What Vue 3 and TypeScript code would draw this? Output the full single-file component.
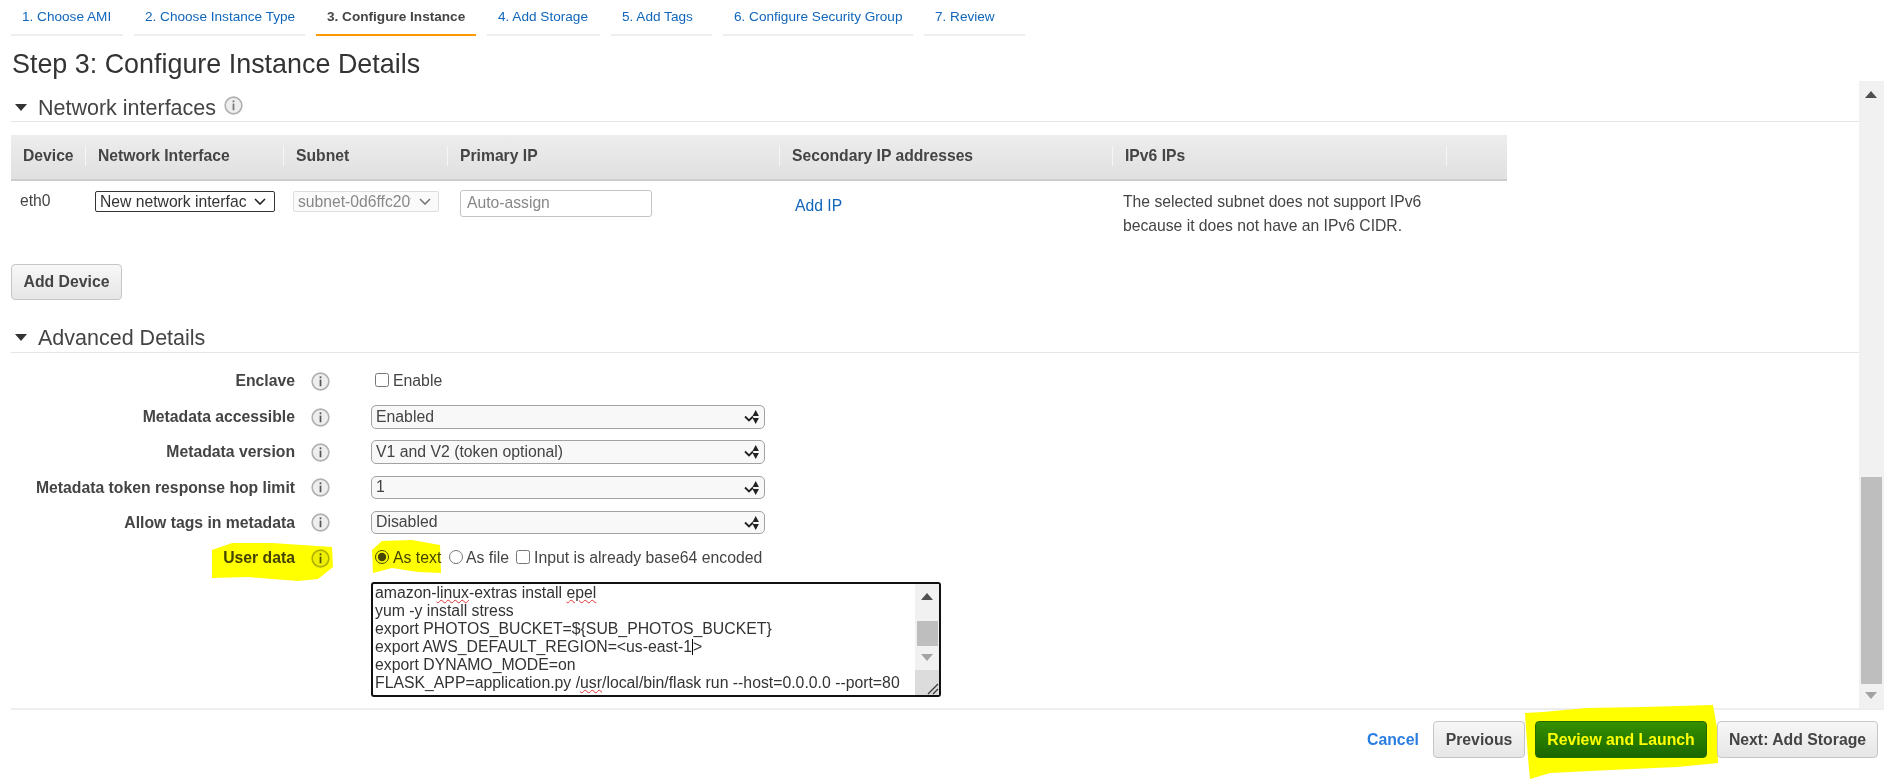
<script setup lang="ts">
const tabs = ['1. Choose AMI', '2. Choose Instance Type', '3. Configure Instance', '4. Add Storage', '5. Add Tags', '6. Configure Security Group', '7. Review']
const tabWidths = [112, 171, 160, 113, 101, 190, 101]
const headers = [
  { label: 'Device', w: 75 },
  { label: 'Network Interface', w: 198 },
  { label: 'Subnet', w: 164 },
  { label: 'Primary IP', w: 332 },
  { label: 'Secondary IP addresses', w: 333 },
  { label: 'IPv6 IPs', w: 334 },
]
const rows = [
  { label: 'Metadata accessible', value: 'Enabled', h: 24, mt: 0 },
  { label: 'Metadata version', value: 'V1 and V2 (token optional)', h: 24, mt: 11 },
  { label: 'Metadata token response hop limit', value: '1', h: 23, mt: 12 },
  { label: 'Allow tags in metadata', value: 'Disabled', h: 23, mt: 12 },
]
</script>

<template>
  <div class="page">
    <nav class="tabs">
      <a
        v-for="(t, i) in tabs"
        :key="t"
        class="tab"
        :class="{ active: i === 2 }"
        :style="{ width: tabWidths[i] + 'px' }"
      >{{ t }}</a>
    </nav>
    <h1 class="title">Step 3: Configure Instance Details</h1>

    <div class="middle">
      <main class="content">
        <section class="sec-head sec-net">
          <svg class="caret" width="12" height="7" viewBox="0 0 12 7"><path d="M0 0h12L6 7z" fill="#333" /></svg>
          <h2>Network interfaces</h2>
          <svg class="info net-info" width="19" height="19" viewBox="0 0 20 20">
            <circle cx="10" cy="10" r="8.8" fill="#eee" stroke="#b0b0b0" stroke-width="1.7" />
            <rect x="9.1" y="8" width="1.8" height="7" fill="#777" /><rect x="9.1" y="4.6" width="1.8" height="2" fill="#777" />
          </svg>
        </section>

        <div class="table">
          <div class="thead">
            <div v-for="h in headers" :key="h.label" class="th" :style="{ width: h.w + 'px' }"><span>{{ h.label }}</span></div>
            <div class="th last"></div>
          </div>
          <div class="tbody">
            <div class="td cell-dev">eth0</div>
            <div class="td cell-nic">
              <div class="mini-select">
                <select><option>New network interface</option></select>
                <svg width="12" height="7" viewBox="0 0 12 7"><path d="M1 1l5 5 5-5" fill="none" stroke="#222" stroke-width="1.6" /></svg>
              </div>
            </div>
            <div class="td cell-sub">
              <div class="mini-select off">
                <select disabled><option>subnet-0d6ffc20f1a2b3c4d</option></select>
                <svg width="12" height="7" viewBox="0 0 12 7"><path d="M1 1l5 5 5-5" fill="none" stroke="#777" stroke-width="1.6" /></svg>
              </div>
            </div>
            <div class="td cell-ip"><input class="ip" placeholder="Auto-assign" /></div>
            <div class="td cell-sec"><a class="link">Add IP</a></div>
            <div class="td cell-v6">The selected subnet does not support IPv6<br />because it does not have an IPv6 CIDR.</div>
          </div>
        </div>

        <button class="btn add-device">Add Device</button>

        <section class="sec-head sec-adv">
          <svg class="caret" width="12" height="7" viewBox="0 0 12 7"><path d="M0 0h12L6 7z" fill="#333" /></svg>
          <h2>Advanced Details</h2>
        </section>

        <div class="form">
          <div class="f-row enclave">
            <label class="f-label">Enclave</label>
            <svg class="info" width="19" height="19" viewBox="0 0 20 20">
              <circle cx="10" cy="10" r="8.8" fill="#eee" stroke="#b0b0b0" stroke-width="1.7" />
              <rect x="9.1" y="8" width="1.8" height="7" fill="#555" /><rect x="9.1" y="4.6" width="1.8" height="2" fill="#555" />
            </svg>
            <label class="opt"><input type="checkbox" /> <span>Enable</span></label>
          </div>

          <div v-for="r in rows" :key="r.label" class="f-row" :style="{ marginTop: r.mt + 'px', height: r.h + 'px' }">
            <label class="f-label">{{ r.label }}</label>
            <svg class="info" width="19" height="19" viewBox="0 0 20 20">
              <circle cx="10" cy="10" r="8.8" fill="#eee" stroke="#b0b0b0" stroke-width="1.7" />
              <rect x="9.1" y="8" width="1.8" height="7" fill="#555" /><rect x="9.1" y="4.6" width="1.8" height="2" fill="#555" />
            </svg>
            <div class="big-select">
              <select><option>{{ r.value }}</option></select>
              <svg width="16" height="14" viewBox="0 0 16 14">
                <path d="M1 6.5l4 4 4-4" fill="none" stroke="#222" stroke-width="1.8" />
                <path d="M8.5 6l3.2-6 3.2 6zM8.5 8l3.2 6 3.2-6z" fill="#222" />
              </svg>
            </div>
          </div>

          <div class="f-row user-row">
            <label class="f-label ud">User data</label>
            <svg class="info" width="19" height="19" viewBox="0 0 20 20">
              <circle cx="10" cy="10" r="8.8" fill="#eee" stroke="#b0b0b0" stroke-width="1.7" />
              <rect x="9.1" y="8" width="1.8" height="7" fill="#555" /><rect x="9.1" y="4.6" width="1.8" height="2" fill="#555" />
            </svg>
            <div class="opts">
              <label class="opt"><input type="radio" name="ud" checked /> <span>As text</span></label>
              <label class="opt"><input type="radio" name="ud" /> <span>As file</span></label>
              <label class="opt"><input type="checkbox" /> <span>Input is already base64 encoded</span></label>
            </div>
          </div>

          <div class="ta-wrap">
            <div class="ta" role="textbox" aria-multiline="true">
              <div class="ta-text">
                <div>amazon-<span class="sp">linux</span>-extras install <span class="sp">epel</span></div>
                <div>yum -y install stress</div>
                <div>export PHOTOS_BUCKET=${SUB_PHOTOS_BUCKET}</div>
                <div>export AWS_DEFAULT_REGION=&lt;us-east-1<span class="cur"></span>&gt;</div>
                <div>export DYNAMO_MODE=on</div>
                <div>FLASK_APP=application.py /<span class="sp">usr</span>/local/bin/flask run --host=0.0.0.0 --port=80</div>
              </div>
              <div class="ta-bar">
                <svg class="ta-up" width="12" height="7" viewBox="0 0 12 7"><path d="M0 7h12L6 0z" fill="#505050" /></svg>
                <div class="ta-thumb"></div>
                <svg class="ta-down" width="12" height="7" viewBox="0 0 12 7"><path d="M0 0h12L6 7z" fill="#a3a3a3" /></svg>
                <div class="ta-corner">
                  <svg width="14" height="14" viewBox="0 0 14 14"><path d="M13 3L3 13M13 8L8 13" stroke="#333" stroke-width="1.2" /></svg>
                </div>
              </div>
            </div>
          </div>
        </div>
      </main>

      <div class="scroll">
        <svg class="s-up" width="12" height="7" viewBox="0 0 12 7"><path d="M0 7h12L6 0z" fill="#505050" /></svg>
        <div class="s-thumb"></div>
        <svg class="s-down" width="12" height="7" viewBox="0 0 12 7"><path d="M0 0h12L6 7z" fill="#a3a3a3" /></svg>
      </div>

      <svg class="mark mark-ud" width="122" height="38" viewBox="0 0 122 38"><path d="M0 7 L20 0 L60 0 L120 4 L121 24 L106 36 L86 38 L36 34 L0 35 Z" fill="#ffff00" /></svg>
      <svg class="mark mark-at" width="71" height="34" viewBox="0 0 71 34"><path d="M1 10 L11 1 L41 0 L69 5 L70 33 L47 32 L21 28 L2 33 Z" fill="#ffff00" /></svg>
    </div>

    <footer class="foot">
      <svg class="mark-rl" width="194" height="74" viewBox="0 0 194 74"><path d="M0 8 L18 7 L62 3 L118 2 L188 0 L192 23 L193 58 L152 62 L85 65 L25 68 L5 74 L3 53 Z" fill="#ffff00" /></svg>
      <a class="link cancel">Cancel</a>
      <button class="btn prev">Previous</button>
      <button class="btn review">Review and Launch</button>
      <button class="btn next">Next: Add Storage</button>
    </footer>
  </div>
</template>

<style>
html, body { margin: 0; background: #fff; overflow: hidden; }
</style>

<style scoped>
.page {
  width: 1884px;
  height: 779px;
  overflow: hidden;
  display: flex;
  flex-direction: column;
  font-family: "Liberation Sans", Arial, sans-serif;
  color: #444;
  background: #fff;
}
.tabs { display: flex; padding-left: 11px; height: 36px; box-sizing: border-box; flex: none; }
.tab {
  box-sizing: border-box;
  height: 36px;
  border-bottom: 2px solid #eee;
  margin-right: 11px;
  padding-left: 11px;
  color: #1166bb;
  font-size: 13.6px;
  line-height: 34px;
  white-space: nowrap;
}
.tab:last-child { margin-right: 0; }
.tab.active { color: #444; font-weight: 700; border-bottom-color: #f90; }
.title {
  margin: 12px 0 0 12px;
  height: 33px;
  flex: none;
  font-weight: 400;
  font-size: 26.9px;
  line-height: 33px;
  color: #333;
}
.middle { position: relative; display: flex; flex: none; height: 627px; border-bottom: 2px solid #eee; margin-left: 11px; }
.content { flex: 1; min-width: 0; display: flex; flex-direction: column; align-items: flex-start; }
.content > * { flex: none; }
.scroll { position: relative; width: 25px; background: #f1f1f1; flex: none; }
.s-up { position: absolute; left: 6px; top: 10px; }
.s-down { position: absolute; left: 6px; bottom: 9px; }
.s-thumb { position: absolute; left: 2px; right: 2px; top: 396px; height: 207px; background: #bebebe; }

.sec-head { display: flex; align-items: center; width: 100%; box-sizing: border-box; border-bottom: 1px solid #e6e6e6; position: relative; }
.sec-net { height: 41px; padding-top: 13px; }
.sec-adv { height: 30px; margin-top: 23px; }
.caret { margin-left: 4px; margin-right: 11px; flex: none; }
.sec-head h2 { margin: 0; font-weight: 400; font-size: 21.5px; line-height: 24px; color: #444; }
.net-info { margin-left: 8px; margin-top: -5px; }
.info { flex: none; }

.table { margin-top: 13px; width: 1496px; }
.thead {
  display: flex;
  height: 46px;
  box-sizing: border-box;
  border-bottom: 2px solid #ccc;
  background: linear-gradient(#ededed, #e0e0e0);
  align-items: center;
  padding-bottom: 2px;
}
.th {
  box-sizing: border-box;
  height: 20px;
  padding-left: 12px;
  border-right: 1px solid #f6f6f6;
  font-weight: 700;
  font-size: 15.7px;
  line-height: 20px;
  color: #444;
  white-space: nowrap;
  flex: none;
}
.th.last { width: 60px; border-right: 0; }
.tbody { position: relative; display: flex; height: 83px; font-size: 15.7px; color: #444; }
.td { flex: none; box-sizing: border-box; }
.cell-dev { width: 84px; padding: 10px 0 0 9px; line-height: 20px; }
.cell-nic { width: 198px; padding-top: 10px; }
.cell-sub { width: 167px; padding-top: 10px; }
.cell-ip { width: 335px; padding-top: 9px; }
.cell-sec { width: 328px; padding-top: 15px; line-height: 20px; }
.cell-v6 { padding-top: 9px; line-height: 24px; }
.mini-select { position: relative; height: 21px; box-sizing: border-box; }
.mini-select select {
  appearance: none;
  display: block;
  box-sizing: border-box;
  height: 21px;
  width: 180px;
  border: 1px solid #333;
  border-radius: 2px;
  background: #fff;
  color: #333;
  font: 15.7px "Liberation Sans", Arial, sans-serif;
  padding: 0 28px 0 4px;
  margin: 0;
}
.mini-select svg { position: absolute; left: 159px; top: 7px; pointer-events: none; }
.mini-select.off select { width: 146px; padding-right: 27px; border-color: #ddd; background: #fafafa; color: #888; opacity: 1; }
.mini-select.off svg { left: 126px; }
.ip {
  display: block;
  box-sizing: border-box;
  width: 192px;
  height: 27px;
  border: 1px solid #c4c4c4;
  border-radius: 3px;
  padding: 0 6px 2px;
  font: 15.7px "Liberation Sans", Arial, sans-serif;
  margin: 0;
}
.ip::placeholder { color: #888; opacity: 1; }
.link { color: #1166bb; text-decoration: none; }

.btn {
  box-sizing: border-box;
  border: 1px solid #c6c6c6;
  border-radius: 4px;
  background: linear-gradient(#f7f7f7, #e6e6e6);
  font: 700 15.8px "Liberation Sans", Arial, sans-serif;
  color: #444;
  padding: 0;
  margin: 0;
}
.add-device { width: 111px; height: 36px; }

.form { width: 100%; }
.f-row { display: flex; align-items: center; height: 24px; }
.f-label {
  flex: none;
  width: 284px;
  text-align: right;
  font-weight: 700;
  font-size: 15.75px;
  color: #444;
  white-space: nowrap;
}
.f-row .info { margin-left: 16px; }
.enclave { margin-top: 16px; margin-bottom: 12px; height: 24px; }
.opt { display: inline-flex; align-items: center; font-size: 15.8px; color: #444; white-space: nowrap; }
.opt input { width: 14px; height: 14px; margin: 0 0 3px; accent-color: #444; flex: none; }
.opt span { margin-left: 4px; }
.enclave .opt { margin-left: 45px; }
.big-select { position: relative; margin-left: 41px; width: 394px; height: 100%; }
.big-select select {
  appearance: none;
  display: block;
  box-sizing: border-box;
  width: 394px;
  height: 100%;
  border: 1px solid #a2a2a2;
  border-radius: 5px;
  background: #f8f8f8;
  color: #444;
  font: 15.8px "Liberation Sans", Arial, sans-serif;
  padding: 0 24px 2px 4px;
  margin: 0;
}
.big-select svg { position: absolute; right: 5px; top: 50%; margin-top: -7px; pointer-events: none; }
.user-row { margin-top: 12px; height: 24px; position: relative; }
.opts { display: flex; margin-left: 45px; }
.opts .opt:nth-child(1) { width: 74px; }
.opts .opt:nth-child(2) { width: 67px; }
.opts .opt:nth-child(2) span { margin-left: 3px; }
.ta-wrap { padding-left: 360px; margin-top: 12px; }
.ta {
  box-sizing: border-box;
  width: 570px;
  height: 115px;
  border: 2px solid #111;
  border-radius: 3px;
  display: flex;
  overflow: hidden;
  background: #fff;
}
.ta-text { flex: 1; min-width: 0; padding: 0 0 0 2px; font-size: 15.8px; line-height: 18px; color: #333; white-space: nowrap; overflow: hidden; }
.sp { text-decoration: underline wavy #d33; text-decoration-thickness: 1px; }
.cur { display: inline-block; width: 1px; height: 16px; background: #000; vertical-align: -3px; }
.ta-bar { position: relative; width: 24px; background: #f1f1f1; flex: none; }
.ta-up { position: absolute; left: 6px; top: 9px; }
.ta-down { position: absolute; left: 6px; top: 70px; }
.ta-thumb { position: absolute; left: 2px; right: 1px; top: 37px; height: 25px; background: #bebebe; }
.ta-corner { position: absolute; left: 0; right: 0; bottom: 0; height: 25px; background: #dcdcdc; display: flex; align-items: flex-end; justify-content: flex-end; }

.mark { position: absolute; pointer-events: none; mix-blend-mode: multiply; }
.mark-ud { left: 201px; top: 462px; }
.mark-at { left: 360px; top: 459px; }

.foot {
  position: relative;
  flex: 1;
  display: flex;
  align-items: flex-start;
  padding-top: 11px;
  padding-left: 1356px;
  box-sizing: border-box;
  margin-left: 11px;
}
.mark-rl { position: absolute; left: 1514px; top: -5px; }
.cancel { position: relative; width: 66px; font-weight: 700; font-size: 15.8px; line-height: 37px; color: #2a7de1; }
.prev { position: relative; width: 92px; height: 37px; margin-right: 10px; }
.review {
  position: relative;
  width: 172px;
  height: 37px;
  margin-right: 10px;
  background: linear-gradient(#359000, #1a6700);
  border-color: #276b00;
  color: #ffff00;
}
.next { position: relative; width: 161px; height: 37px; }
</style>
